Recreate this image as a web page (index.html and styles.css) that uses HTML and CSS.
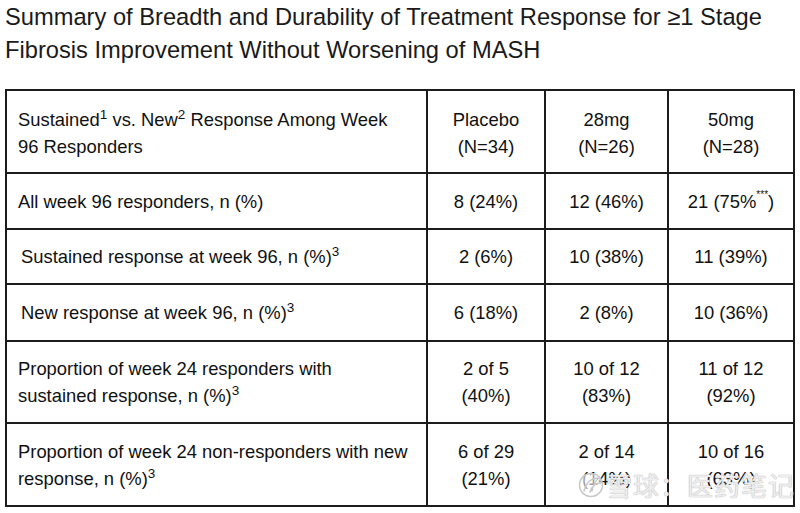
FILE: index.html
```html
<!DOCTYPE html>
<html>
<head>
<meta charset="utf-8">
<link rel="stylesheet" href="styles.css">
</head>
<body>
<div class="page">
  <h1 class="title">Summary of Breadth and Durability of Treatment Response for ≥1 Stage Fibrosis Improvement Without Worsening of MASH</h1>
  <table class="data">
    <colgroup>
      <col class="c-label">
      <col class="c-pbo">
      <col class="c-28">
      <col class="c-50">
    </colgroup>
    <tr class="r-head">
      <td class="label">Sustained<sup>1</sup> vs. New<sup>2</sup> Response Among Week 96 Responders</td>
      <td>Placebo<br>(N=34)</td>
      <td>28mg<br>(N=26)</td>
      <td>50mg<br>(N=28)</td>
    </tr>
    <tr class="r-2">
      <td class="label">All week 96 responders, n (%)</td>
      <td>8 (24%)</td>
      <td>12 (46%)</td>
      <td>21 (75%<sup class="stars">***</sup>)</td>
    </tr>
    <tr class="r-3">
      <td class="label indent">Sustained response at week 96, n (%)<sup>3</sup></td>
      <td>2 (6%)</td>
      <td>10 (38%)</td>
      <td>11 (39%)</td>
    </tr>
    <tr class="r-4">
      <td class="label indent">New response at week 96, n (%)<sup>3</sup></td>
      <td>6 (18%)</td>
      <td>2 (8%)</td>
      <td>10 (36%)</td>
    </tr>
    <tr class="r-5">
      <td class="label">Proportion of week 24 responders with sustained response, n (%)<sup>3</sup></td>
      <td>2 of 5<br>(40%)</td>
      <td>10 of 12<br>(83%)</td>
      <td>11 of 12<br>(92%)</td>
    </tr>
    <tr class="r-6">
      <td class="label">Proportion of week 24 non-responders with new response, n (%)<sup>3</sup></td>
      <td>6 of 29<br>(21%)</td>
      <td>2 of 14<br>(14%)</td>
      <td>10 of 16<br>(63%)</td>
    </tr>
  </table>
  <div class="watermark"><svg class="wm-logo" width="27" height="26" viewBox="0 0 27 26"><circle cx="13" cy="13" r="11.5" fill="rgba(255,255,255,0.6)" stroke="#c8c8c8" stroke-width="1.5"/><path d="M6 19 C8 11, 13 6, 21 6 C17 9, 15 13, 14 19 M12 20 C14 14, 18 11, 23 11" fill="none" stroke="#c8c8c8" stroke-width="1.5" stroke-linecap="round"/></svg><span class="wm-text">雪球：医药笔记</span></div>
</div>
</body>
</html>
```
FILE: styles.css
```css
html, body {
  margin: 0;
  padding: 0;
  background: #ffffff;
}
.page {
  position: relative;
  width: 800px;
  height: 513px;
  padding: 1px 5px 0 5px;
  box-sizing: border-box;
  font-family: "Liberation Sans", Arial, sans-serif;
  color: #111;
  overflow: hidden;
}
.title {
  margin: 0;
  font-weight: normal;
  font-size: 23.7px;
  line-height: 33px;
  color: #1a1a1a;
}
.data {
  margin-top: 22px;
  width: 788px;
  border-collapse: collapse;
  table-layout: fixed;
  font-size: 18.4px;
  line-height: 27px;
}
.c-label { width: 421px; }
.c-pbo { width: 118px; }
.c-28 { width: 123px; }
.c-50 { width: 126px; }
.data td {
  border: 2px solid #1c1c1c;
  text-align: center;
  vertical-align: middle;
  padding: 0 4px;
}
.data td.label {
  text-align: left;
  padding-left: 11px;
  padding-right: 15px;
}
.data td.indent {
  padding-left: 14px;
}
.r-head td { padding-top: 3px; }
.r-head { height: 83px; }
.r-2 { height: 56px; }
.r-3 { height: 55px; }
.r-4 { height: 57px; }
.r-5 { height: 82px; }
.r-6 { height: 83px; }
sup {
  font-size: 13.5px;
  line-height: 0;
  vertical-align: 7px;
}
sup.stars {
  font-size: 10px;
  vertical-align: 10px;
}
.watermark {
  position: absolute;
  left: 578px;
  top: 468px;
  display: flex;
  align-items: center;
  white-space: nowrap;
}
.wm-logo {
  display: block;
  margin-right: 1px;
}
.wm-text {
  font-family: "Noto Sans CJK SC", sans-serif;
  font-size: 26px;
  line-height: 34px;
  color: rgba(255, 255, 255, 0.8);
  text-shadow: 0 0 1px #b0b0b0, 0 0 1px #b0b0b0;
  letter-spacing: 1px;
}
```
